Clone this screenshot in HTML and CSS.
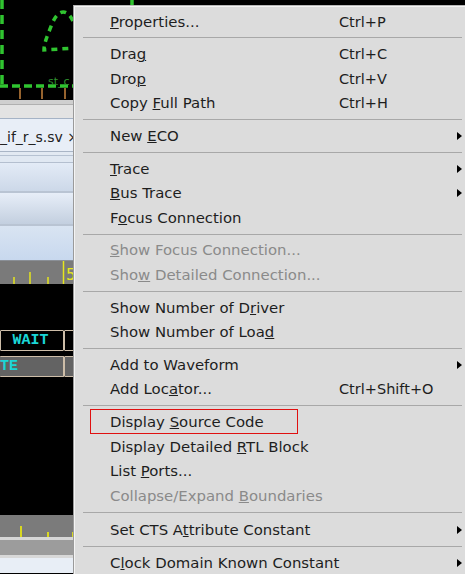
FILE: index.html
```html
<!DOCTYPE html>
<html lang="en">
<head>
<meta charset="UTF-8">
<title>Schematic context menu</title>
<link rel="stylesheet" href="styles.css">
</head>
<body>
<div class="app">
  <div class="canvas">
    <svg width="465" height="100" viewBox="0 0 465 100">
      <g fill="none" stroke="#30c430" stroke-width="3.5">
        <line x1="2" y1="0" x2="2" y2="84" stroke-dasharray="9 6"/>
        <line x1="0" y1="86" x2="110" y2="86" stroke-dasharray="8 4"/>
        <path d="M73 21 C67 8 58 9 52 24 S44 44 44 50 L76 48" stroke-dasharray="6 5"/>
        <line x1="132" y1="0" x2="132" y2="60"/>
      </g>
      <text x="48" y="85" class="netname">st_c</text>
      <g stroke="#c8853e" stroke-width="1.5">
        <line x1="20" y1="88" x2="20" y2="99"/>
        <line x1="42" y1="88" x2="42" y2="99"/>
        <line x1="65" y1="88" x2="65" y2="99"/>
      </g>
    </svg>
  </div>
  <div class="toolbar"></div>
  <div class="tabs"><span class="tab">_if_r_s.sv&nbsp;×</span></div>
  <div class="stripes"></div>
  <div class="panel p1"></div>
  <div class="panel p2"></div>
  <div class="panel p3"></div>
  <div class="ruler">
    <svg width="465" height="23" viewBox="0 0 465 23">
      <g stroke="#e6e61e" stroke-width="1.5">
        <line x1="14" y1="16" x2="14" y2="23"/>
        <line x1="30" y1="11" x2="30" y2="23"/>
        <line x1="48" y1="16" x2="48" y2="23"/>
        <line x1="63.5" y1="0" x2="63.5" y2="23"/>
      </g>
      <text x="66" y="19" class="rulerlabel">5</text>
    </svg>
  </div>
  <div class="wave">
    <div class="bus">
      <div class="seg first">WAIT</div>
      <div class="seg"></div>
    </div>
    <div class="bus grey">
      <div class="seg first left">TE</div>
      <div class="seg"></div>
    </div>
  </div>
  <div class="ruler low">
    <svg width="465" height="22" viewBox="0 0 465 22">
      <g stroke="#d8d820" stroke-width="2">
        <line x1="21" y1="11" x2="21" y2="22"/>
        <line x1="48" y1="17" x2="48" y2="22"/>
        <line x1="73" y1="17" x2="73" y2="22"/>
      </g>
    </svg>
  </div>
  <div class="scroll"></div>
  <div class="status"></div>
</div>

<div class="menu">
  <div class="item"><span class="label"><u>P</u>roperties...</span><span class="key">Ctrl+P</span></div>
  <div class="sep"></div>
  <div class="item"><span class="label">Dra<u>g</u></span><span class="key">Ctrl+C</span></div>
  <div class="item"><span class="label">Dro<u>p</u></span><span class="key">Ctrl+V</span></div>
  <div class="item"><span class="label">Copy <u>F</u>ull Path</span><span class="key">Ctrl+H</span></div>
  <div class="sep"></div>
  <div class="item"><span class="label">New <u>E</u>CO</span><i class="arrow"></i></div>
  <div class="sep"></div>
  <div class="item"><span class="label"><u>T</u>race</span><i class="arrow"></i></div>
  <div class="item"><span class="label"><u>B</u>us Trace</span><i class="arrow"></i></div>
  <div class="item"><span class="label">F<u>o</u>cus Connection</span></div>
  <div class="sep"></div>
  <div class="item off"><span class="label"><u>S</u>how Focus Connection...</span></div>
  <div class="item off"><span class="label">Sho<u>w</u> Detailed Connection...</span></div>
  <div class="sep"></div>
  <div class="item"><span class="label">Show Number of D<u>r</u>iver</span></div>
  <div class="item"><span class="label">Show Number of Loa<u>d</u></span></div>
  <div class="sep"></div>
  <div class="item"><span class="label">Add to Waveform</span><i class="arrow"></i></div>
  <div class="item"><span class="label">Add Loc<u>a</u>tor...</span><span class="key">Ctrl+Shift+O</span></div>
  <div class="sep"></div>
  <div class="item marked"><span class="label">Display <u>S</u>ource Code</span></div>
  <div class="item"><span class="label">Display Detailed <u>R</u>TL Block</span></div>
  <div class="item"><span class="label">List <u>P</u>orts...</span></div>
  <div class="item off"><span class="label">Collapse/Expand <u>B</u>oundaries</span></div>
  <div class="sep tall"></div>
  <div class="item"><span class="label">Set CTS A<u>t</u>tribute Constant</span><i class="arrow"></i></div>
  <div class="sep tall"></div>
  <div class="item"><span class="label">C<u>l</u>ock Domain Known Constant</span><i class="arrow"></i></div>
</div>
</body>
</html>
```

FILE: styles.css
```css
body{margin:0;width:465px;height:574px;overflow:hidden;position:relative;background:#000;font-family:"DejaVu Sans",sans-serif;}

.app{display:flex;flex-direction:column;width:465px;}
.canvas{height:100px;background:#000;}
.canvas svg{display:block;}
.netname{font:11px "DejaVu Sans",sans-serif;fill:#2f8f2f;}

.toolbar{height:18px;background:linear-gradient(#cfcfcf 0,#cfcfcf 4px,#b0b0b0 4px,#b0b0b0 5px,#e3e3e3 5px);}
.tabs{height:32px;border-top:1px solid #a5b3c6;background:#e8eef7;display:flex;align-items:center;}
.tab{font-size:14px;color:#222;padding-top:4px;}
.stripes{height:12px;background:linear-gradient(#a9b5c6 0,#a9b5c6 1px,#e2e9f2 1px,#e2e9f2 4px,#b6c2d2 4px,#b6c2d2 5px,#e0e8f2 5px,#e0e8f2 11px,#b4bfcf 11px);}
.panel{border-bottom:2px solid #b9c4d3;}
.p1{height:28px;background:linear-gradient(#e3ebf6,#ccd8e8);}
.p2{height:31px;background:linear-gradient(#e7eef8,#c3cfdf);}
.p3{height:34px;border-bottom:1px solid #8a8f96;background:linear-gradient(#d9e4f2,#c8d8ee);}

.ruler{height:23px;background:#7a7a7a;}
.ruler svg{display:block;}
.rulerlabel{font:16px "DejaVu Sans Mono",monospace;fill:#e6e61e;}
.ruler.low{height:22px;background:#7b7b7b;border-bottom:3px solid #d6d6d6;}

.wave{height:231px;background:#000;padding-top:46px;box-sizing:border-box;display:flex;flex-direction:column;gap:5px;}
.bus{display:flex;height:21px;}
.seg{flex:1;border:1px solid #cdbda8;border-radius:1px;box-sizing:border-box;color:#1ad6d6;font:15px "Liberation Mono",monospace;font-weight:bold;display:flex;align-items:center;justify-content:center;}
.seg.first{flex:0 0 64px;padding-right:3px;}
.seg.left{justify-content:flex-start;border-left:0;}
.bus.grey .seg{background:#636363;}

.scroll{height:15px;background:#9c9c9c;border-bottom:3px solid #d8d8d8;}
.status{height:15px;background:#e8eef6;}

/* popup menu */
.menu{position:absolute;left:73px;top:5px;width:401px;height:580px;box-sizing:border-box;background:#dcdcdc;border-left:1px solid #9a9a9a;border-top:1px solid #b8b8b8;box-shadow:inset 1px 1px 0 #f4f4f4;padding-top:3.4px;font-size:14.9px;color:#1e1e1e;}
.item{display:flex;align-items:center;height:24.6px;padding-left:36px;position:relative;white-space:nowrap;}
.label{flex:0 0 229px;}
.key{font-size:14.5px;}
.item u{text-decoration-thickness:1px;}
.off{color:#8a8a8a;}
.arrow{margin-left:auto;margin-right:12px;width:0;height:0;border-left:5px solid #000;border-top:4.5px solid transparent;border-bottom:4.5px solid transparent;}
.sep{height:8px;margin:0 12px 0 9px;display:flex;align-items:center;}
.sep.tall{height:9.2px;}
.sep::before{content:"";flex:1;border-top:1px solid #a8a8a8;}
.marked::after{content:"";position:absolute;left:16px;top:-0.5px;width:208px;height:25px;border:1px solid #e01010;box-sizing:border-box;}
```
